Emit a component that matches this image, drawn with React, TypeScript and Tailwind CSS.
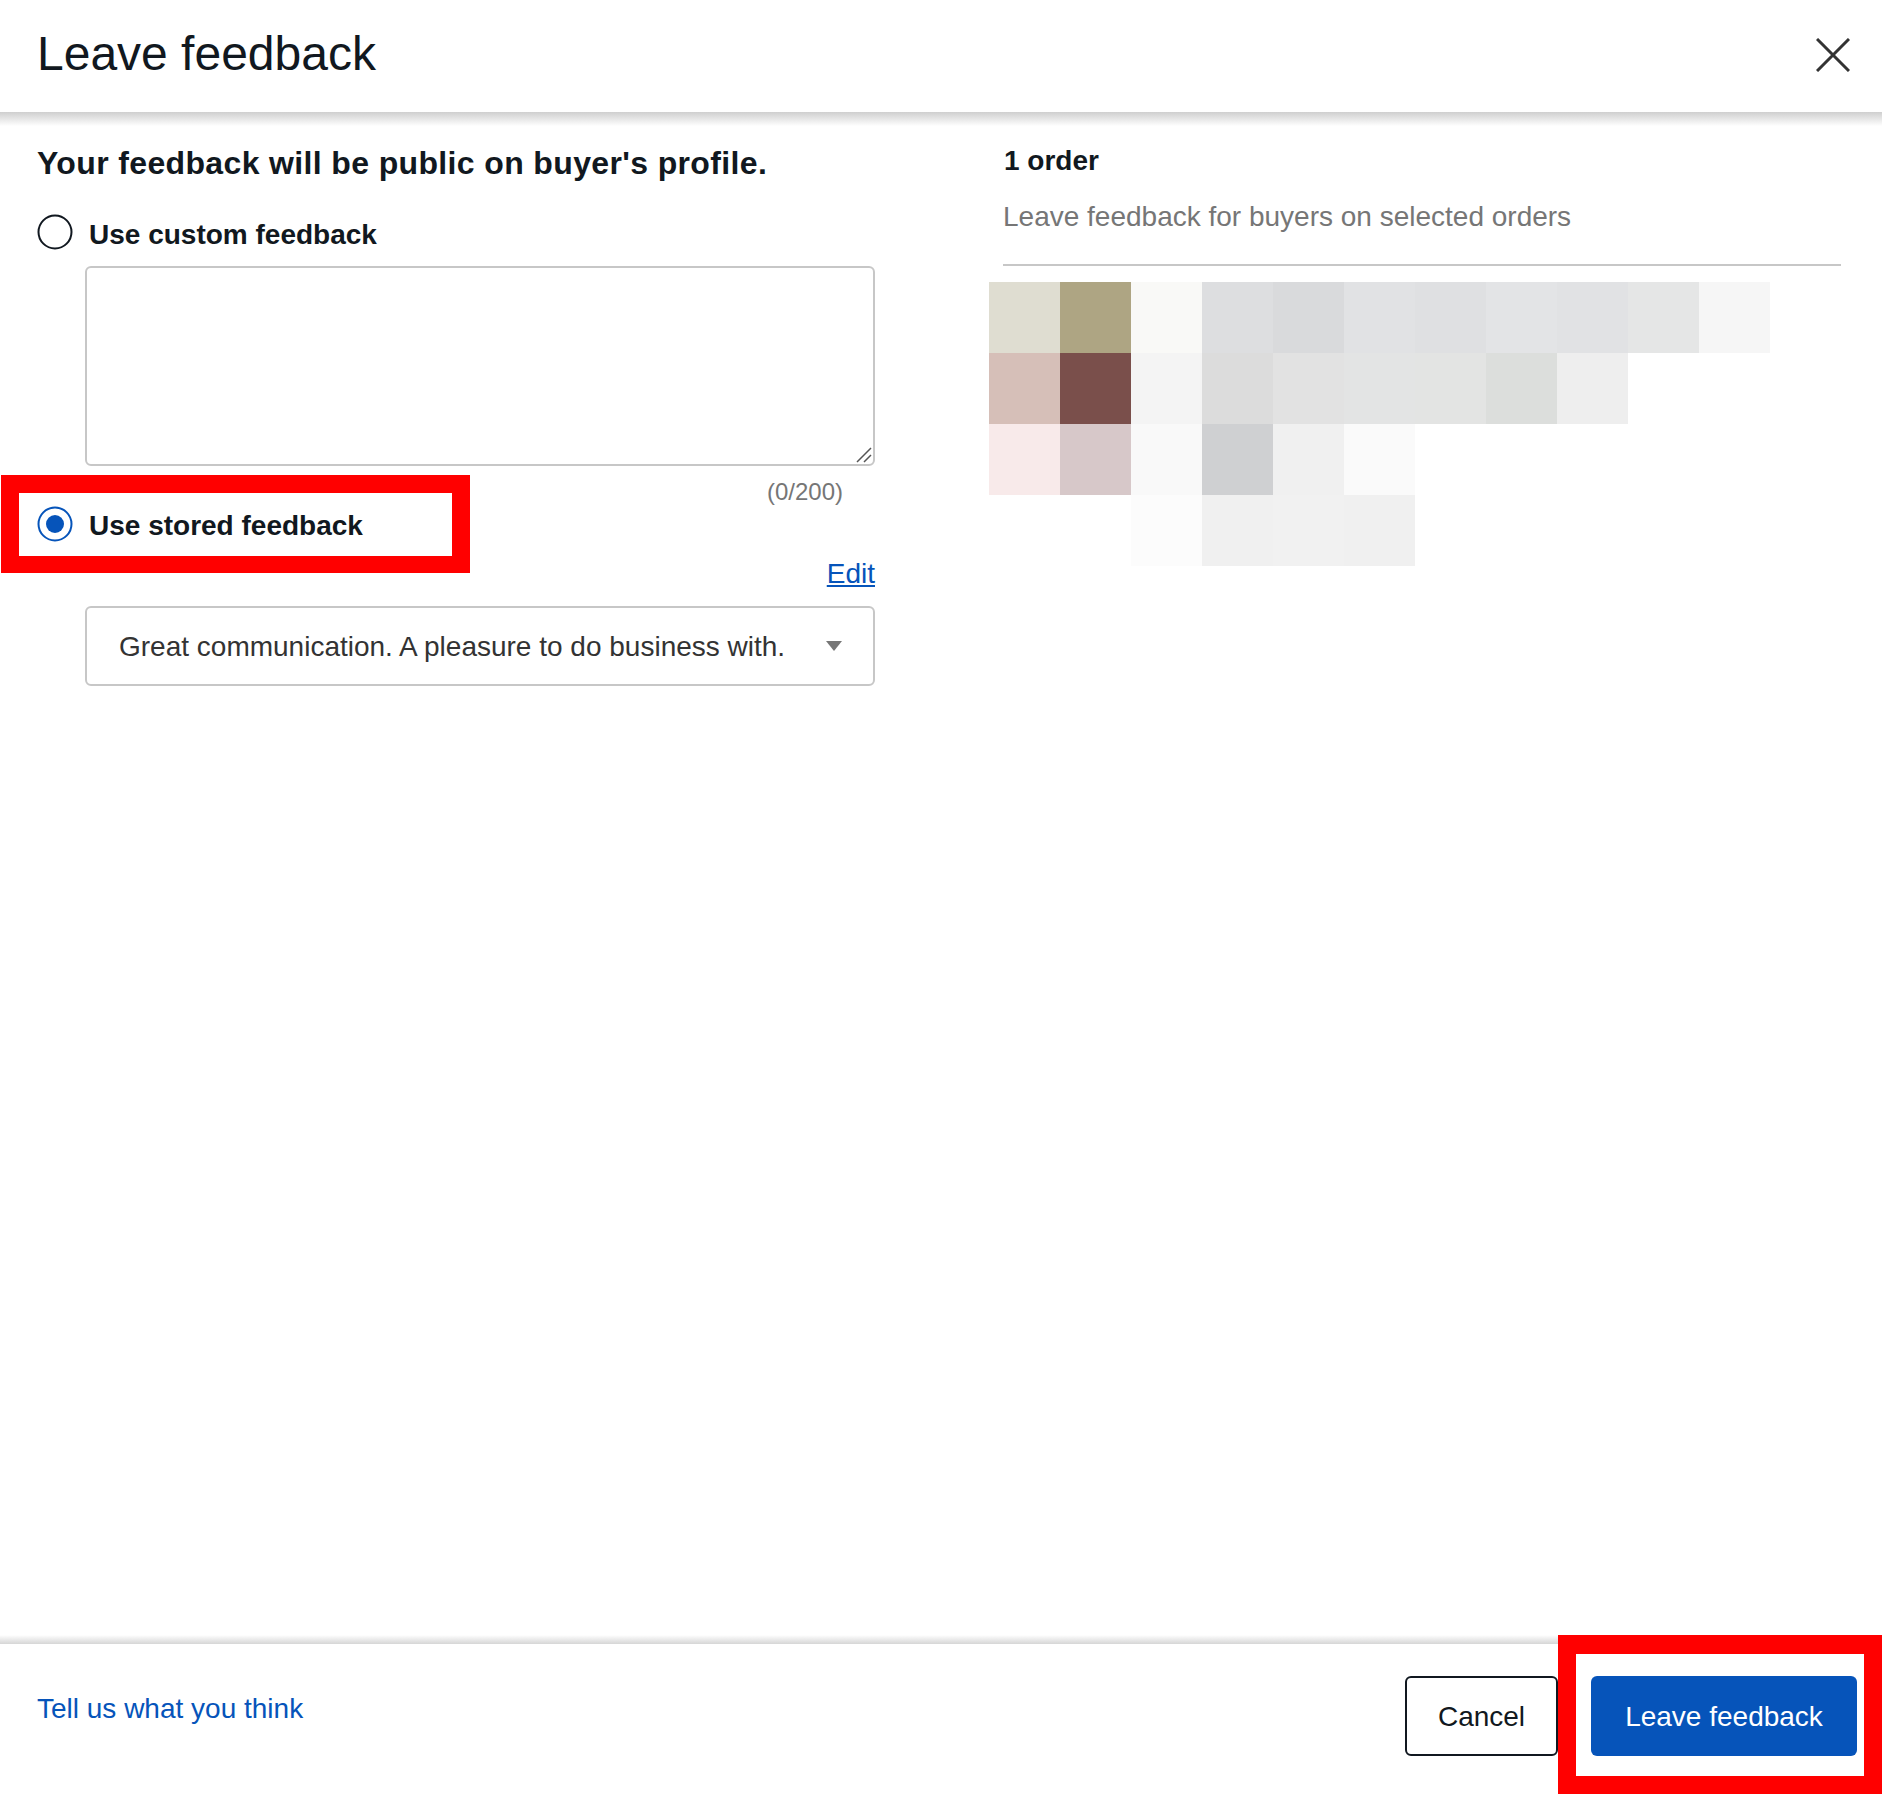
const thumbRows = [
  ["bg-[#dfddd1]", "bg-[#aea583]", "bg-[#f9f9f7]", "bg-[#dddee0]", "bg-[#d9dadc]", "bg-[#e1e2e4]", "bg-[#dfe0e2]", "bg-[#e3e4e6]", "bg-[#e1e2e4]", "bg-[#e5e6e6]", "bg-[#f6f6f6]"],
  ["bg-[#d6bfb8]", "bg-[#7a4f4b]", "bg-[#f4f4f4]", "bg-[#dcdcdc]", "bg-[#e2e2e2]", "bg-[#e3e4e4]", "bg-[#e3e4e3]", "bg-[#dcdedc]", "bg-[#eeeeee]"],
  ["bg-[#f8eaea]", "bg-[#d7c8c9]", "bg-[#f9f9f9]", "bg-[#cfd0d2]", "bg-[#f0f0f0]", "bg-[#fafafa]"],
  ["bg-white", "bg-white", "bg-[#fcfcfc]", "bg-[#f0f0f0]", "bg-[#f1f1f1]", "bg-[#f0f0f0]"],
];

const Radio = ({ checked }: { checked?: boolean }) => (
  <svg width="36" height="36" viewBox="0 0 36 36" className="shrink-0">
    <circle cx="18" cy="18" r="16.5" fill="white" stroke={checked ? "#0654ba" : "#111820"} strokeWidth="2" />
    {checked && <circle cx="18" cy="18" r="9" fill="#0654ba" />}
  </svg>
);

const App = () => {
  return (
    <div className="relative flex h-[1794px] w-[1882px] flex-col overflow-hidden bg-white font-['Liberation_Sans',Arial,sans-serif] text-[28px] text-[#111820]">
      {/* Шапка */}
      <header className="flex h-[112px] shrink-0 items-center justify-between pl-[37px] pr-[32px]">
        <h1 className="-mt-[4px] text-[48px] leading-none">Leave feedback</h1>
        <svg width="34" height="34" viewBox="0 0 34 34" fill="none" stroke="#333" strokeWidth="3" className="-mt-[2px]">
          <path d="M1 1 L33 33 M33 1 L1 33" />
        </svg>
      </header>
      <div className="h-[14px] shrink-0 bg-gradient-to-b from-[#cfcfcf] to-white" />

      <main className="flex flex-1">
        {/* Форма */}
        <div className="w-[1003px] pl-[37px]">
          <h2 className="mt-[17px] text-[32px] font-bold leading-[40px] tracking-[0.36px]">Your feedback will be public on buyer's profile.</h2>

          <label className="mt-[31px] flex h-[36px] items-center gap-[16px]">
            <Radio />
            <span className="mt-[5px] font-bold">Use custom feedback</span>
          </label>
          <div className="relative ml-[48px] mt-[16px] h-[200px] w-[790px]">
            <textarea className="block h-full w-full resize-none rounded-[6px] border-2 border-[#c7c7c7] bg-white" />
            <svg width="16" height="16" viewBox="0 0 16 16" fill="none" stroke="#555" strokeWidth="1.5" className="pointer-events-none absolute bottom-[3px] right-[3px]">
              <path d="M1 15 L15 1 M8 15 L15 8" />
            </svg>
          </div>
          <div className="ml-[49px] mt-[14px] flex h-[24px] w-[757px] items-center justify-end text-[24px] text-[#767676]">
            (0/200)
          </div>

          <label className="mt-[2px] flex h-[36px] items-center gap-[16px]">
            <Radio checked />
            <span className="mt-[4px] font-bold">Use stored feedback</span>
          </label>
          <div className="ml-[49px] mt-[16px] flex w-[789px] justify-end leading-[32px]">
            <a className="text-[#0654ba] underline">Edit</a>
          </div>
          <div className="ml-[48px] mt-[16px] flex h-[80px] w-[790px] items-center justify-between rounded-[6px] border-2 border-[#c7c7c7] pl-[32px] pr-[31px] text-[#333]">
            <span className="mt-[1px]">Great communication. A pleasure to do business with.</span>
            <svg width="16" height="10" viewBox="0 0 16 10">
              <path d="M0 0 H16 L8 10 Z" fill="#767676" />
            </svg>
          </div>
        </div>

        {/* Заказы */}
        <div className="w-[838px]">
          <div className="mt-[17px] pl-[1px] font-bold leading-[36px]">1 order</div>
          <div className="mt-[20px] leading-[36px] text-[#767676]">Leave feedback for buyers on selected orders</div>
          <div className="mt-[29px] h-[2px] bg-[#c7c7c7]" />
          <div className="-ml-[14px] mt-[16px]">
            {thumbRows.map((row, i) => (
              <div key={i} className="flex">
                {row.map((color, j) => (
                  <div key={j} className={`h-[71px] w-[71px] ${color}`} />
                ))}
              </div>
            ))}
          </div>
        </div>
      </main>

      {/* Подвал */}
      <div className="h-[9px] shrink-0 bg-gradient-to-b from-white to-[#d6d6d6]" />
      <footer className="flex h-[150px] shrink-0 items-start justify-between pl-[37px] pr-[25px]">
        <a className="mt-[49px] leading-[32px] text-[#0654ba]">Tell us what you think</a>
        <div className="mt-[32px] flex gap-[33px]">
          <button className="h-[80px] w-[153px] rounded-[6px] border-2 border-[#111820] bg-white pt-[2px]">Cancel</button>
          <button className="h-[80px] w-[266px] rounded-[6px] bg-[#0654ba] pt-[2px] text-white">Leave feedback</button>
        </div>
      </footer>

      {/* Красные рамки поверх страницы */}
      <div className="pointer-events-none absolute left-[1px] top-[475px] h-[98px] w-[469px] border-x-[18px] border-b-[17px] border-t-[18px] border-[#ff0000]" />
      <div className="pointer-events-none absolute left-[1558px] top-[1635px] h-[159px] w-[324px] border-x-[18px] border-b-[18px] border-t-[19px] border-[#ff0000]" />
    </div>
  );
};

export default App;
